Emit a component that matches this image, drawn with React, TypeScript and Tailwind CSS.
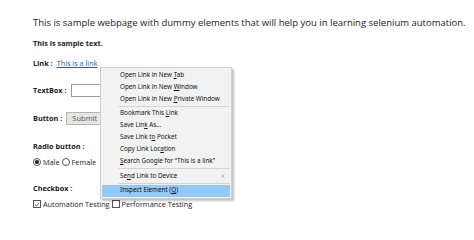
import type { ReactNode } from "react";

const pageFont = { fontFamily: '"Comic Sans MS", "Open Sans", sans-serif' };
const menuFont = { fontFamily: '"Segoe UI", "Noto Sans", sans-serif' };

type MenuEntry =
  | { kind: "item"; label: ReactNode; arrow?: boolean; active?: boolean }
  | { kind: "sep" };

const u = (c: string) => <span className="underline underline-offset-1">{c}</span>;

const menu: MenuEntry[] = [
  { kind: "item", label: <>Open Link in New {u("T")}ab</> },
  { kind: "item", label: <>Open Link in New {u("W")}indow</> },
  { kind: "item", label: <>Open Link in New {u("P")}rivate Window</> },
  { kind: "sep" },
  { kind: "item", label: <>Bookmark This {u("L")}ink</> },
  { kind: "item", label: <>Save Lin{u("k")} As…</> },
  { kind: "item", label: <>Save Link t{u("o")} Pocket</> },
  { kind: "item", label: <>Copy Link Loc{u("a")}tion</> },
  { kind: "item", label: <>{u("S")}earch Google for “This is a link”</> },
  { kind: "sep" },
  { kind: "item", label: <>Se{u("n")}d Link to Device</>, arrow: true },
  { kind: "sep" },
  { kind: "item", label: <>Inspect Element ({u("Q")})</>, active: true },
];

function ContextMenu() {
  return (
    <div
      style={menuFont}
      className="absolute left-[100px] top-[67px] w-[132px] border border-[#cfcfcf] bg-[#f2f2f2] py-[1px] text-[6.3px] text-[#111] shadow-[2px_2px_2px_rgba(0,0,0,0.25)]"
    >
      {menu.map((entry, i) =>
        entry.kind === "sep" ? (
          <div key={i} className="flex h-[2.5px] items-center pl-[17px] pr-[1px]">
            <div className="h-px w-full bg-[#d4d4d4]" />
          </div>
        ) : (
          <div
            key={i}
            className={[
              "mx-[1px] flex h-[12px] items-center justify-between pl-[18px] pr-[6px]",
              entry.active ? "bg-[#91c9f7]" : "",
            ].join(" ")}
          >
            <span className="whitespace-nowrap leading-none">{entry.label}</span>
            {entry.arrow ? <span className="text-[7px] text-[#555]">›</span> : null}
          </div>
        ),
      )}
    </div>
  );
}

function Radio({ checked }: { checked?: boolean }) {
  return (
    <span className="inline-flex size-[8px] shrink-0 items-center justify-center rounded-full border border-[#555] bg-white">
      {checked ? <span className="size-[4px] rounded-full bg-[#222]" /> : null}
    </span>
  );
}

function Check({ checked }: { checked?: boolean }) {
  return (
    <span className="inline-flex size-[8px] shrink-0 items-center justify-center border border-[#555] bg-white">
      {checked ? (
        <svg viewBox="0 0 8 8" className="size-[7px]" aria-hidden>
          <path d="M1.3 4.2 3.2 6 6.8 1.8" fill="none" stroke="#333" strokeWidth="1" />
        </svg>
      ) : null}
    </span>
  );
}

export default function App() {
  return (
    <div className="relative h-[219px] w-[474px] overflow-hidden bg-white text-[#222]" style={pageFont}>
      <div className="pl-[33px] pt-[17px]">
        <h1 className="text-[9.5px] leading-[12px] whitespace-nowrap">
          This is sample webpage with dummy elements that will help you in learning selenium automation.
        </h1>

        <p className="mt-[9px] text-[7.3px] font-bold leading-[10px]">This is sample text.</p>

        <div className="mt-[10px] flex items-center gap-[4px] text-[7.3px] leading-[10px]">
          <span className="font-bold">Link :</span>
          <a href="#" className="text-[#2b5bb5] underline">This is a link</a>
        </div>

        <div className="mt-[16px] flex items-center gap-[4px] text-[7.3px]">
          <span className="font-bold">TextBox :</span>
          <span className="h-[13px] w-[80px] border border-[#9a9a9a] bg-white" />
        </div>

        <div className="mt-[15px] flex items-center gap-[4px] text-[7.3px]">
          <span className="font-bold">Button :</span>
          <button
            type="button"
            className="h-[13px] border border-[#b5b5b5] bg-[#e6e6e6] px-[5px] text-[7.5px] leading-none text-[#555]"
            style={pageFont}
          >
            Submit
          </button>
        </div>

        <p className="mt-[16px] text-[7.3px] font-bold leading-[10px]">Radio button :</p>

        <div className="mt-[6px] flex items-center gap-[2px] text-[7.3px] leading-[10px]">
          <Radio checked />
          <span>Male</span>
          <Radio />
          <span>Female</span>
        </div>

        <p className="mt-[16px] text-[7.3px] font-bold leading-[10px]">Checkbox :</p>

        <div className="mt-[6px] flex items-center gap-[2px] text-[7.3px] leading-[10px]">
          <Check checked />
          <span>Automation Testing</span>
          <Check />
          <span>Performance Testing</span>
        </div>
      </div>

      <ContextMenu />
    </div>
  );
}
